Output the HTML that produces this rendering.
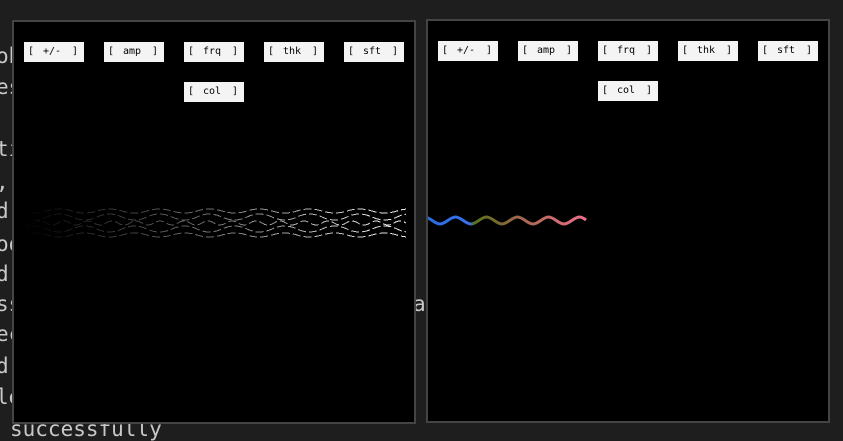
<!DOCTYPE html>
<html><head><style>
html,body{margin:0;padding:0;width:843px;height:440px;overflow:hidden;background:#1e1e1f;}
.bg{position:absolute;left:0;top:0;font-family:"DejaVu Sans Mono","Liberation Mono",monospace;font-size:21px;color:#c8c8c8;white-space:pre;line-height:21px}
.bg div{position:absolute;left:-4px}
.panel{position:absolute;width:400px;height:400px;background:#000;border:2px solid #444;}
.btn{position:absolute;width:60px;height:20px;background:#f4f4f4;font-family:"DejaVu Sans Mono","Liberation Mono",monospace;font-size:10px;color:#000;line-height:20px;}
.btn span{position:absolute;top:0}
</style></head><body>
<div class="bg">
<div style="top:46px">ob</div>
<div style="top:77px">es</div>
<div style="top:139px">ti</div>
<div style="top:172px">,</div>
<div style="top:201px">d</div>
<div style="top:234px">oo</div>
<div style="top:264px">d</div>
<div style="top:294px">ss</div>
<div style="top:324px">ec</div>
<div style="top:356px">d</div>
<div style="top:387px">le</div>
<div style="top:294px;left:413px">a</div>
<div style="top:419px;left:10px">successfully</div>
</div>

<div class="panel" style="left:12px;top:20px">
<div class="btn" style="left:10px;top:20px"><span style="left:4px">[</span><span style="left:19px">+/-</span><span style="left:48px">]</span></div>
<div class="btn" style="left:90px;top:20px"><span style="left:4px">[</span><span style="left:19px">amp</span><span style="left:48px">]</span></div>
<div class="btn" style="left:170px;top:20px"><span style="left:4px">[</span><span style="left:19px">frq</span><span style="left:48px">]</span></div>
<div class="btn" style="left:250px;top:20px"><span style="left:4px">[</span><span style="left:19px">thk</span><span style="left:48px">]</span></div>
<div class="btn" style="left:330px;top:20px"><span style="left:4px">[</span><span style="left:19px">sft</span><span style="left:48px">]</span></div>
<div class="btn" style="left:170px;top:60px"><span style="left:4px">[</span><span style="left:19px">col</span><span style="left:48px">]</span></div>
<svg width="400" height="400" style="position:absolute;left:0;top:0" shape-rendering="crispEdges">
<defs><linearGradient id="g" x1="0" x2="1"><stop offset="0" stop-color="#000"/><stop offset="0.5" stop-color="#777"/><stop offset="1" stop-color="#fff"/></linearGradient>
<clipPath id="c"><rect x="6" y="150" width="386" height="100"/></clipPath></defs>
<g fill="none" stroke="url(#g)" stroke-width="1" stroke-dasharray="8 3" clip-path="url(#c)">
<path d="M8 189 q13 4 25 0 t25 0 t25 0 t25 0 t25 0 t25 0 t25 0 t25 0 t25 0 t25 0 t25 0 t25 0 t25 0 t25 0 t25 0 t25 0"/>
<path d="M8 213 q13 -4 25 0 t25 0 t25 0 t25 0 t25 0 t25 0 t25 0 t25 0 t25 0 t25 0 t25 0 t25 0 t25 0 t25 0 t25 0 t25 0"/>
<path d="M8 195 q13 6 25 0 t25 0 t25 0 t25 0 t25 0 t25 0 t25 0 t25 0 t25 0 t25 0 t25 0 t25 0 t25 0 t25 0 t25 0 t25 0"/>
<path d="M8 207 q13 -6 25 0 t25 0 t25 0 t25 0 t25 0 t25 0 t25 0 t25 0 t25 0 t25 0 t25 0 t25 0 t25 0 t25 0 t25 0 t25 0"/>
<path d="M8 201 q6 4 12 0 t12 0 t12 0 t12 0 t12 0 t12 0 t12 0 t12 0 t12 0 t12 0 t12 0 t12 0 t12 0 t12 0 t12 0 t12 0 t12 0 t12 0 t12 0 t12 0 t12 0 t12 0 t12 0 t12 0 t12 0 t12 0 t12 0 t12 0 t12 0 t12 0 t12 0 t12 0"/>
</g>
</svg>
</div>

<div class="panel" style="left:426px;top:19px">
<div class="btn" style="left:10px;top:20px"><span style="left:4px">[</span><span style="left:19px">+/-</span><span style="left:48px">]</span></div>
<div class="btn" style="left:90px;top:20px"><span style="left:4px">[</span><span style="left:19px">amp</span><span style="left:48px">]</span></div>
<div class="btn" style="left:170px;top:20px"><span style="left:4px">[</span><span style="left:19px">frq</span><span style="left:48px">]</span></div>
<div class="btn" style="left:250px;top:20px"><span style="left:4px">[</span><span style="left:19px">thk</span><span style="left:48px">]</span></div>
<div class="btn" style="left:330px;top:20px"><span style="left:4px">[</span><span style="left:19px">sft</span><span style="left:48px">]</span></div>
<div class="btn" style="left:170px;top:60px"><span style="left:4px">[</span><span style="left:19px">col</span><span style="left:48px">]</span></div>
<svg width="400" height="400" style="position:absolute;left:0;top:0">
<defs><linearGradient id="w" gradientUnits="userSpaceOnUse" x1="0" x2="160">
<stop offset="0" stop-color="#2a6ee0"/><stop offset="0.26" stop-color="#3a70e8"/>
<stop offset="0.29" stop-color="#5a7020"/><stop offset="0.45" stop-color="#7a6a30"/>
<stop offset="0.55" stop-color="#9a6848"/><stop offset="0.75" stop-color="#c86a68"/>
<stop offset="1" stop-color="#f07090"/></linearGradient></defs>
<path d="M-3.5 196 C2.1 196 6.4 203 12 203 C17.6 203 21.9 196 27.5 196 C33.1 196 37.4 203 43 203 C48.6 203 52.9 196 58.5 196 C64.1 196 68.4 203 74 203 C79.6 203 83.9 196 89.5 196 C95.1 196 99.4 203 105 203 C110.6 203 114.9 196 120.5 196 C126.1 196 130.4 203 136 203 C141.6 203 145.9 196 151.5 196 C154 196 156 197.5 158 199" fill="none" stroke="url(#w)" stroke-width="3"/>
</svg>
</div>
</body></html>
